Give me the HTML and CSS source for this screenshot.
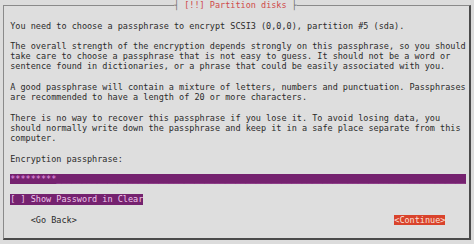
FILE: index.html
```html
<!DOCTYPE html>
<html>
<head>
<meta charset="utf-8">
<link rel="stylesheet" href="styles.css">
</head>
<body>
<div class="screen">
  <div class="box">
    <div class="title"><span class="tee">┤</span> <span class="title-text">[!!] Partition disks</span> <span class="tee">├</span></div>
    <div class="content">
      <div class="para">You need to choose a passphrase to encrypt SCSI3 (0,0,0), partition #5 (sda).</div>
      <div class="para">The overall strength of the encryption depends strongly on this passphrase, so you should
take care to choose a passphrase that is not easy to guess. It should not be a word or
sentence found in dictionaries, or a phrase that could be easily associated with you.</div>
      <div class="para">A good passphrase will contain a mixture of letters, numbers and punctuation. Passphrases
are recommended to have a length of 20 or more characters.</div>
      <div class="para">There is no way to recover this passphrase if you lose it. To avoid losing data, you
should normally write down the passphrase and keep it in a safe place separate from this
computer.</div>
      <div class="para">Encryption passphrase:</div>
      <div class="field"><span class="stars">*********</span><span class="fill">________________________________________________________________________________</span></div>
      <div class="check-row"><span class="check">[ ] Show Password in Clear</span></div>
      <div class="buttons">
        <span class="btn back">&lt;Go Back&gt;</span>
        <span class="btn cont">&lt;Continue&gt;</span>
      </div>
    </div>
  </div>
</div>
</body>
</html>
```
FILE: styles.css
```css
html, body {
  margin: 0;
  padding: 0;
  background: #dcdcdc;
}
body {
  width: 474px;
  height: 244px;
  overflow: hidden;
  font-family: "DejaVu Sans Mono", "Liberation Mono", monospace;
  font-size: 8.5px;
  line-height: 10.24px;
  color: #2b2b2b;
}
.screen {
  padding: 5px 0 0 3px;
}
.box {
  position: relative;
  width: 465px;
  height: 232px;
  border-top: 1px solid #8a8a8a;
  border-left: 1px solid #8a8a8a;
  border-right: 2px solid #4a4a4a;
  border-bottom: 2px solid #4a4a4a;
  background: #dedede;
}
.title {
  position: absolute;
  top: -6px;
  left: 170px;
  height: 10.24px;
  white-space: pre;
  background: #dedede;
  color: #6a6a6a;
}
.title-text {
  color: #cf4a4a;
}
.content {
  padding: 14.5px 0 0 6.24px;
  display: flex;
  flex-direction: column;
  gap: 10.24px;
}
.para {
  white-space: pre;
}
.field {
  width: 455.7px;
  height: 10.24px;
  background: #75226f;
  white-space: pre;
  overflow: hidden;
}
.stars {
  color: #e49ae0;
}
.fill {
  color: #b26aae;
}
.check-row {
  display: flex;
}
.check {
  background: #75226f;
  color: #eec6ea;
  white-space: pre;
}
.buttons {
  display: flex;
  justify-content: space-between;
  width: 455.7px;
}
.btn {
  white-space: pre;
}
.back {
  margin-left: 20.48px;
}
.cont {
  margin-right: 20.48px;
  background: #d9432c;
  color: #fbe0d8;
}
```
